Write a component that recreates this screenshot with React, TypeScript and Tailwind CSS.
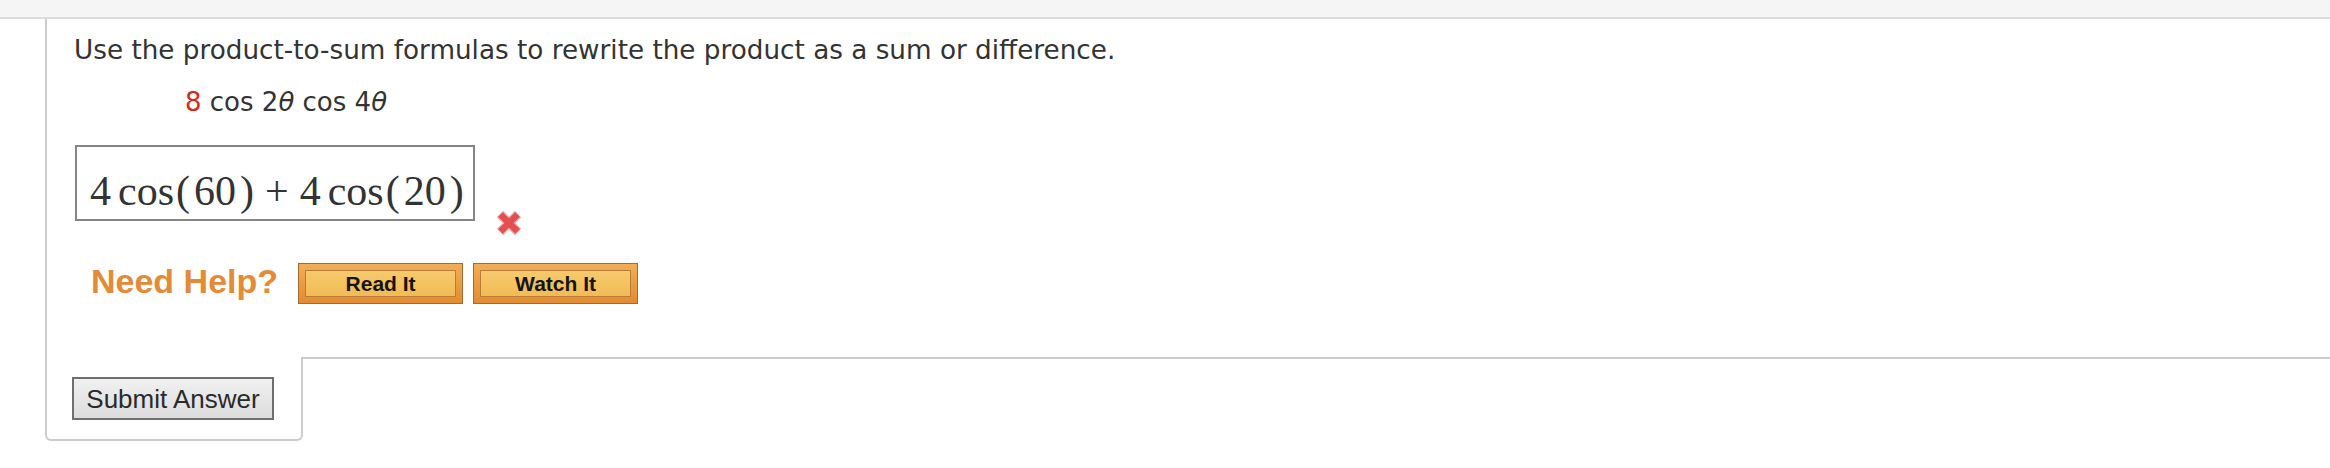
import React from 'react';

function CrossMark() {
  return (
    <svg width="26" height="26" viewBox="0 0 26 26" className="shrink-0">
      <g strokeLinecap="butt">
        <path d="M4 4 L22 22 M22 4 L4 22" stroke="#f2a5a5" strokeWidth="9" />
        <path d="M4.5 4.5 L21.5 21.5 M21.5 4.5 L4.5 21.5" stroke="#e14f4f" strokeWidth="6.5" />
      </g>
    </svg>
  );
}

function HelpButton({ label }: { label: string }) {
  return (
    <button className="w-[165px] h-[41px] border border-[#a26b2f] bg-gradient-to-b from-[#f3ad55] to-[#e48b2f] p-[6px]">
      <span className="flex h-full items-center justify-center border border-[#b77b3b] bg-gradient-to-b from-[#f7ca6c] to-[#f1bb55] font-['Liberation_Sans',Arial,sans-serif] text-[21px] font-bold leading-none text-[#141414]">
        {label}
      </span>
    </button>
  );
}

function App() {
  return (
    <div className="w-[2330px] h-[468px] bg-white font-['DejaVu_Sans',Verdana,sans-serif] text-[#333333]">
      <div className="h-[19px] bg-[#f5f5f5] border-b-2 border-[#dcdcdc]" />

      <div className="ml-[45px] h-[338px] border-l-2 border-[#cccccc] pl-[27px] pt-[13px]">
        <p className="text-[26.25px] leading-[36px]">
          Use the product-to-sum formulas to rewrite the product as a sum or difference.
        </p>
        <p className="mt-[16px] ml-[111px] text-[26px] leading-[36px]">
          <span className="text-[#d8291d]">8</span> cos 2<span className="italic">θ</span> cos 4
          <span className="italic">θ</span>
        </p>

        <div className="mt-[25px] flex items-start">
          <div className="ml-[1px] w-[400px] h-[76px] border-2 border-[#858585] pl-[13px] pt-[23px]">
            <div className="flex font-['Liberation_Serif','Times_New_Roman',serif] text-[42px] leading-[42px] text-[#333333]">
              <span>4</span>
              <span className="ml-[7px]">cos</span>
              <span className="ml-[2px]">(</span>
              <span className="ml-[4px]">60</span>
              <span className="ml-[4px]">)</span>
              <span className="ml-[11px]">+</span>
              <span className="ml-[11px]">4</span>
              <span className="ml-[7px]">cos</span>
              <span className="ml-[2px]">(</span>
              <span className="ml-[4px]">20</span>
              <span className="ml-[4px]">)</span>
            </div>
          </div>
          <div className="ml-[21px] mt-[65px]">
            <CrossMark />
          </div>
        </div>

        <div className="mt-[27px] ml-[17px] flex items-start">
          <span className="font-['Liberation_Sans',Arial,sans-serif] text-[34px] font-bold leading-[36px] text-[#e38b37]">
            Need Help?
          </span>
          <div className="ml-[20px] flex gap-[10px]">
            <HelpButton label="Read It" />
            <HelpButton label="Watch It" />
          </div>
        </div>
      </div>

      <div className="ml-[45px] flex items-start">
        <div className="w-[258px] h-[84px] border-l-2 border-r-2 border-b-2 border-[#cccccc] rounded-b-[6px] pl-[25px] pt-[20px]">
          <button className="w-[202px] h-[43px] border-2 border-[#6f6f6f] bg-gradient-to-b from-[#f1f1f1] to-[#dcdcdc] font-['Liberation_Sans',Arial,sans-serif] text-[26px] leading-none text-[#2a2a2a]">
            Submit Answer
          </button>
        </div>
        <div className="flex-1 border-t-2 border-[#cccccc]" />
      </div>
    </div>
  );
}

export default App;
